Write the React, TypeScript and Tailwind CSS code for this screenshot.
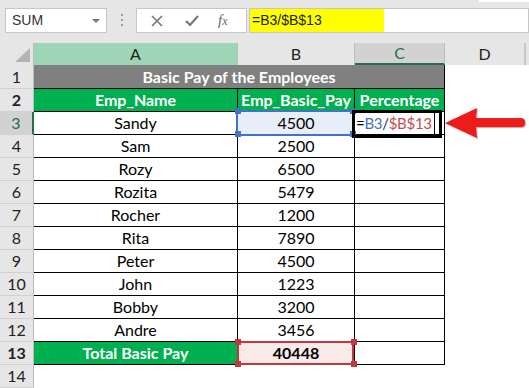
import React from 'react';

const rows: [string, string][] = [
  ['Sandy', '4500'],
  ['Sam', '2500'],
  ['Rozy', '6500'],
  ['Rozita', '5479'],
  ['Rocher', '1200'],
  ['Rita', '7890'],
  ['Peter', '4500'],
  ['John', '1223'],
  ['Bobby', '3200'],
  ['Andre', '3456'],
];

function RowHead({ n, active }: { n: number; active?: boolean }) {
  return (
    <div
      className={
        'w-[34px] shrink-0 flex items-center justify-center border-b border-[#d0d0d0] ' +
        (active
          ? 'bg-[#d2d2d2] text-[#217346] border-r-2 border-r-[#217346]'
          : 'bg-[#e6e6e6] text-[#222] border-r border-r-[#bcbcbc]')
      }
    >
      {n}
    </div>
  );
}

function Handle({ className }: { className: string }) {
  return <div className={'absolute w-[6px] h-[6px] ' + className} />;
}

export default function App() {
  return (
    <div className="relative w-[529px] h-[388px] overflow-hidden bg-white font-['Lato',sans-serif] text-[16px] text-black">
      {/* formula bar */}
      <div className="relative h-[43px] bg-[#e6e6e6] flex items-start pt-[8px] font-['Liberation_Sans',sans-serif] text-[14px]">
        <div className="absolute right-0 top-0 w-[50px] h-[2px] bg-white" />
        <div className="ml-[5px] w-[102px] h-[25px] bg-white border border-[#c6c6c6] flex items-center justify-between pl-[6px] pr-[6px] text-[#333]">
          <span>SUM</span>
          <span className="w-0 h-0 border-l-[4px] border-r-[4px] border-t-[4px] border-l-transparent border-r-transparent border-t-[#777]" />
        </div>
        <div className="ml-[14px] mt-[6px] flex flex-col gap-[3px]">
          <div className="w-[2px] h-[2px] bg-[#9a9a9a]" />
          <div className="w-[2px] h-[2px] bg-[#9a9a9a]" />
          <div className="w-[2px] h-[2px] bg-[#9a9a9a]" />
        </div>
        <div className="ml-[13px] w-[111px] h-[25px] bg-white border border-[#c6c6c6] flex items-center text-[#777]">
          <svg width="12" height="12" viewBox="0 0 12 12" className="ml-[14px]">
            <path d="M1 1 L11 11 M11 1 L1 11" stroke="#777" strokeWidth="1.6" />
          </svg>
          <svg width="14" height="12" viewBox="0 0 14 12" className="ml-[22px]">
            <path d="M1 6 L5 10 L13 1" stroke="#777" strokeWidth="2.2" fill="none" />
          </svg>
          <span className="ml-[19px] font-['Liberation_Serif',serif] italic text-[15px] text-[#666]">
            f<span className="text-[12px]">x</span>
          </span>
        </div>
        <div className="ml-[2px] flex-1 h-[25px] bg-white border border-[#c6c6c6] flex">
          <div className="w-[134px] h-full bg-[#ffff00] flex items-center pl-[2px] text-[#222]">=B3/$B$13</div>
        </div>
      </div>

      {/* column headers */}
      <div className="flex h-[22px] text-[#222]">
        <div className="relative w-[34px] shrink-0 bg-[#e6e6e6] border-r border-[#bcbcbc]">
          <svg width="16" height="14" viewBox="0 0 16 14" className="absolute left-[15px] top-[5px]">
            <path d="M15 0 L15 14 L0 14 Z" fill="#b4b4b4" />
          </svg>
        </div>
        <div className="w-[204px] shrink-0 bg-[#9fd5b7] border-r border-[#bcbcbc] flex items-center justify-center">A</div>
        <div className="w-[117px] shrink-0 bg-[#e6e6e6] border-r border-[#bcbcbc] flex items-center justify-center">B</div>
        <div className="w-[90px] shrink-0 bg-[#d2d2d2] border-r border-[#bcbcbc] border-b-2 border-b-[#217346] flex items-center justify-center text-[#217346]">C</div>
        <div className="w-[81px] shrink-0 bg-[#e6e6e6] border-r-2 border-[#c8c8c8] flex items-center justify-center">D</div>
        <div className="flex-1 bg-[#e6e6e6]" />
      </div>

      {/* row 1 */}
      <div className="flex h-[24px]">
        <RowHead n={1} />
        <div className="w-[411px] shrink-0 bg-[#808080] border-r border-b border-black flex items-center justify-center font-bold text-white">
          Basic Pay of the Employees
        </div>
      </div>

      {/* row 2 */}
      <div className="flex h-[23px] font-bold text-white">
        <RowHead n={2} />
        <div className="w-[204px] shrink-0 bg-[#00b050] border-r border-b border-black flex items-center justify-center">Emp_Name</div>
        <div className="w-[117px] shrink-0 bg-[#00b050] border-r border-b border-black flex items-center justify-center">Emp_Basic_Pay</div>
        <div className="w-[90px] shrink-0 bg-[#00b050] border-r border-b border-black flex items-center justify-center">Percentage</div>
      </div>

      {/* data rows */}
      {rows.map(([name, pay], i) => (
        <div key={name} className="flex h-[23px]">
          <RowHead n={i + 3} active={i === 0} />
          <div className="w-[204px] shrink-0 border-r border-b border-black flex items-center justify-center">{name}</div>
          <div
            className={
              'w-[117px] shrink-0 border-r border-b border-black flex items-center justify-center ' +
              (i === 0 ? 'bg-[#e7eef9]' : '')
            }
          >
            {pay}
          </div>
          <div className="w-[90px] shrink-0 border-r border-b border-black flex items-center">
            {i === 0 && (
              <span className="pl-[1px] text-[15px] tracking-[-0.3px]">
                =<span className="text-[#4472c4]">B3</span>
                <span className="text-[#1f2d5a]">/</span>
                <span className="text-[#c0504d]">$B$13</span>
              </span>
            )}
          </div>
        </div>
      ))}

      {/* row 13 */}
      <div className="flex h-[23px] font-bold">
        <RowHead n={13} />
        <div className="w-[204px] shrink-0 bg-[#00b050] border-r border-b border-black flex items-center justify-center text-white">
          Total Basic Pay
        </div>
        <div className="w-[117px] shrink-0 bg-[#f9e9e9] border-r border-b border-black flex items-center justify-center text-black">
          40448
        </div>
        <div className="w-[90px] shrink-0 border-r border-b border-black" />
      </div>

      {/* row 14 */}
      <div className="flex h-[23px]">
        <RowHead n={14} />
      </div>

      {/* B3 reference highlight */}
      <div className="absolute left-[236px] top-[110px] w-[118px] h-[26px] border-2 border-[#4472c4]" />
      <Handle className="left-[235px] top-[108px] bg-[#4472c4]" />
      <Handle className="left-[350px] top-[108px] bg-[#4472c4]" />
      <Handle className="left-[235px] top-[131px] bg-[#4472c4]" />
      <Handle className="left-[350px] top-[131px] bg-[#4472c4]" />

      {/* B13 reference highlight */}
      <div className="absolute left-[237px] top-[341px] w-[117px] h-[24px] border-2 border-[#c0393f]" />
      <Handle className="left-[235px] top-[339px] bg-[#c0393f]" />
      <Handle className="left-[351px] top-[339px] bg-[#c0393f]" />
      <Handle className="left-[235px] top-[361px] bg-[#c0393f]" />
      <Handle className="left-[351px] top-[361px] bg-[#c0393f]" />

      {/* active cell C3 */}
      <div className="absolute left-[352px] top-[110px] w-[90px] h-[28px] border-[3px] border-black" />
      <div className="absolute left-[434px] top-[113px] w-[1px] h-[21px] bg-black" />

      {/* red arrow */}
      <svg width="84" height="36" viewBox="0 0 84 36" className="absolute left-[443px] top-[105px]">
        <path
          d="M2 18 L34 3 L33 13 L78 13 Q82 13 82 17.5 Q82 22 78 22 L33 22 L34 33 Z"
          fill="#9c1010"
          transform="translate(1 1)"
          opacity="0.35"
        />
        <path d="M2 18 L34 3 L33 13 L78 13 Q82 13 82 17.5 Q82 22 78 22 L33 22 L34 33 Z" fill="#ec1c1c" />
      </svg>
    </div>
  );
}
